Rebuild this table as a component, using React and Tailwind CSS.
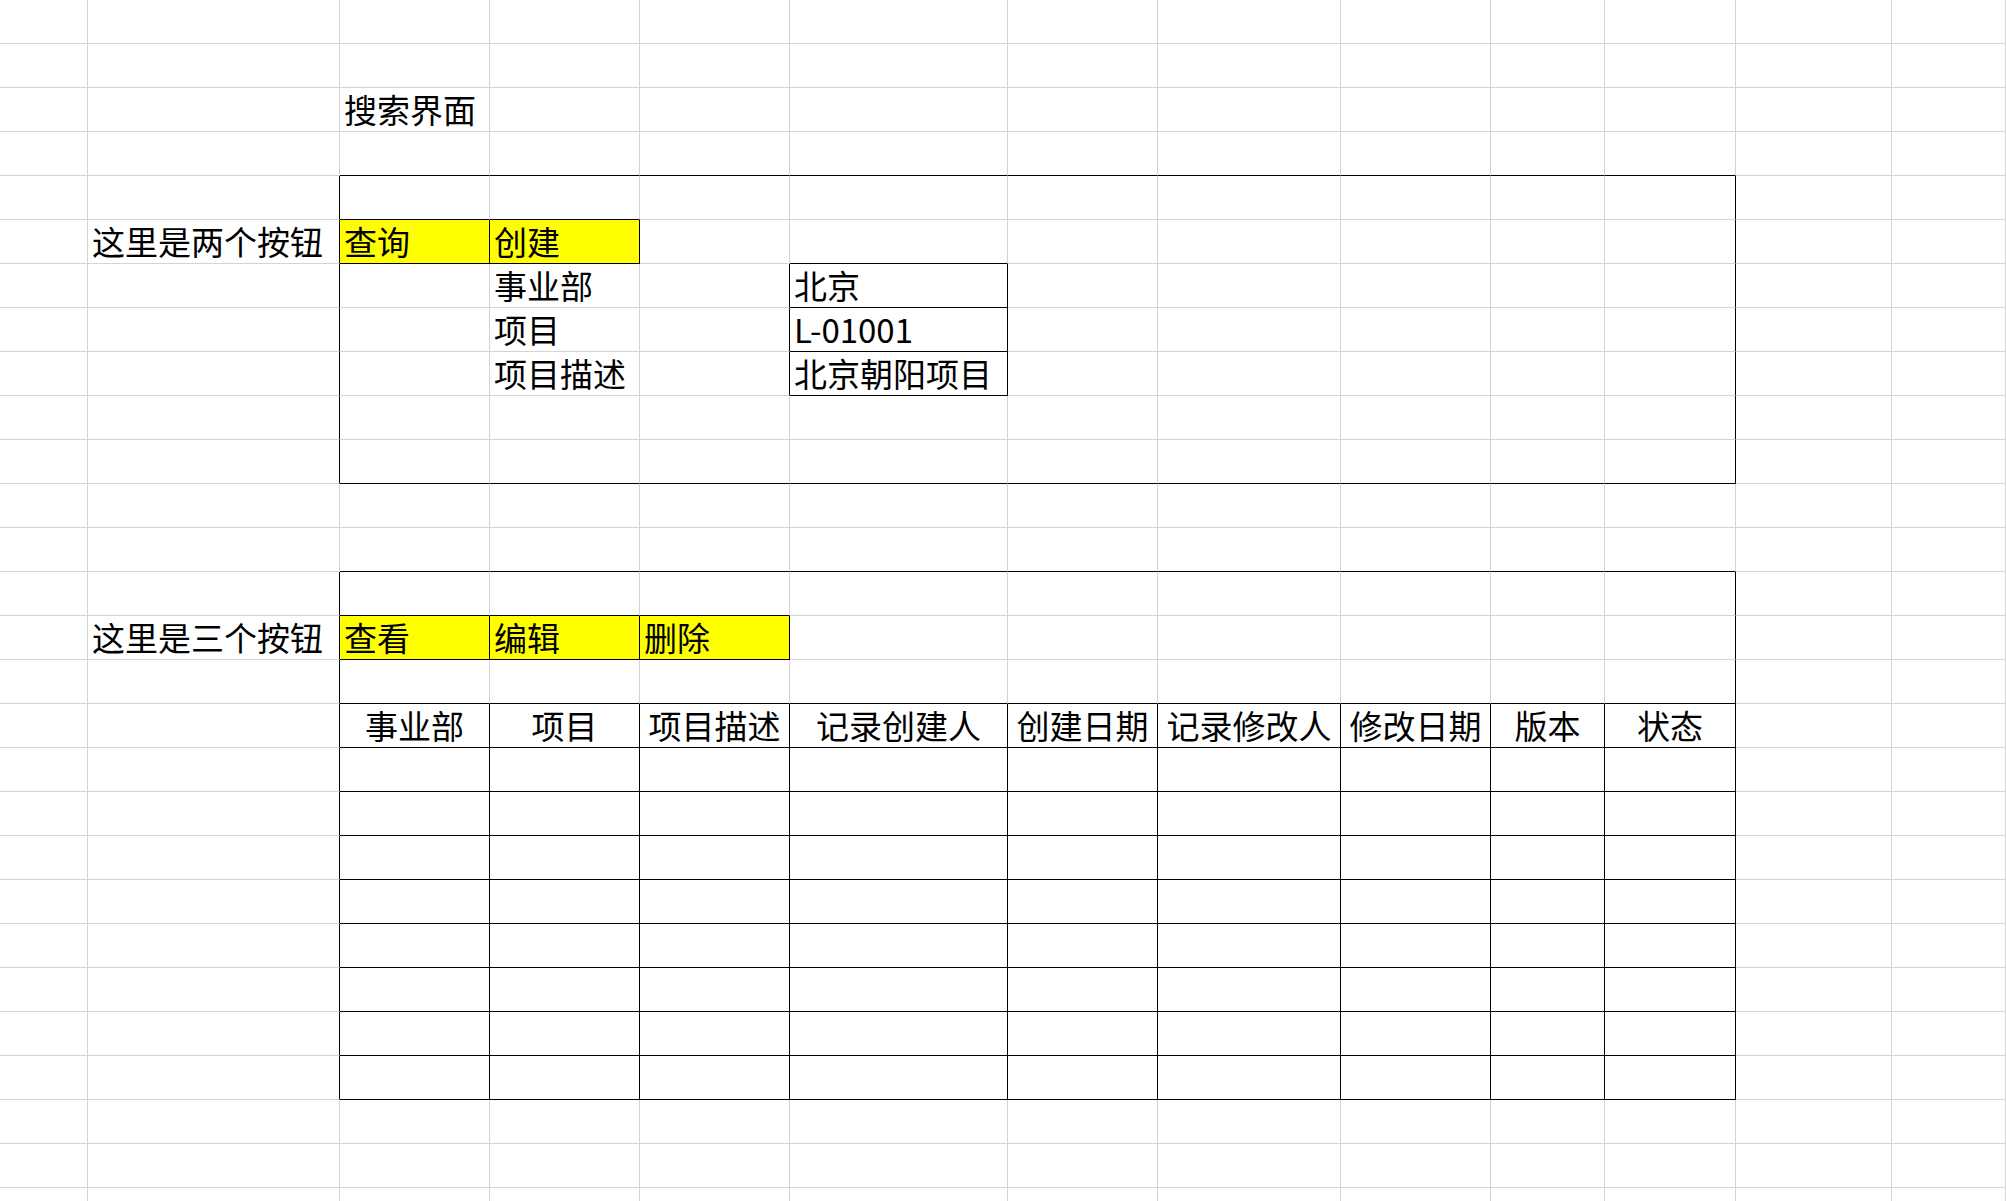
import React from "react";

const ROWS = 28;
const COLS = 13;

const texts = {
  "2,2": "搜索界面",
  "5,1": "这里是两个按钮",
  "5,2": "查询",
  "5,3": "创建",
  "6,3": "事业部",
  "6,5": "北京",
  "7,3": "项目",
  "7,5": "L-01001",
  "8,3": "项目描述",
  "8,5": "北京朝阳项目",
  "14,1": "这里是三个按钮",
  "14,2": "查看",
  "14,3": "编辑",
  "14,4": "删除",
};

const headers = ["事业部", "项目", "项目描述", "记录创建人", "创建日期", "记录修改人", "修改日期", "版本", "状态"];

const inR = (r, a, b) => r >= a && r <= b;

function isYellow(r, c) {
  return (r === 5 && inR(c, 2, 3)) || (r === 14 && inR(c, 2, 4));
}

function rightBlack(r, c) {
  if ((c === 1 || c === 10) && (inR(r, 4, 10) || inR(r, 13, 24))) return true;
  if (r === 5 && inR(c, 2, 3)) return true;
  if (r === 14 && inR(c, 2, 4)) return true;
  if ((c === 4 || c === 5) && inR(r, 6, 8)) return true;
  if (inR(r, 16, 24) && inR(c, 1, 10)) return true;
  return false;
}

function bottomBlack(r, c) {
  if (inR(c, 2, 10) && (r === 3 || r === 10 || r === 12 || r === 24)) return true;
  if (inR(c, 2, 3) && (r === 4 || r === 5)) return true;
  if (inR(c, 2, 4) && (r === 13 || r === 14)) return true;
  if (c === 5 && inR(r, 5, 8)) return true;
  if (inR(c, 2, 10) && inR(r, 15, 24)) return true;
  return false;
}

function Cell({ r, c }) {
  let text = texts[`${r},${c}`];
  let center = false;
  if (r === 16 && inR(c, 2, 10)) {
    text = headers[c - 2];
    center = true;
  }
  const cls = [
    "h-[44px] border-r border-b flex items-center whitespace-nowrap overflow-visible text-[33px] leading-[43px] text-black",
    rightBlack(r, c) ? "border-r-black" : "border-r-[#d4d4d4]",
    bottomBlack(r, c) ? "border-b-black" : "border-b-[#d4d4d4]",
    isYellow(r, c) ? "bg-[#ffff00]" : "bg-white",
    center ? "justify-center" : "justify-start pl-[4px]",
  ].join(" ");
  return <div className={cls}>{text ? <span>{text}</span> : null}</div>;
}

export default function App() {
  const cells = [];
  for (let r = 0; r < ROWS; r++) {
    for (let c = 0; c < COLS; c++) {
      cells.push(<Cell key={`${r}-${c}`} r={r} c={c} />);
    }
  }
  return (
    <div
      className="h-screen w-full overflow-hidden bg-white"
      style={{ fontFamily: '"Noto Sans CJK SC", "Noto Sans", sans-serif' }}
    >
      <div className="grid grid-cols-[88px_252px_150px_150px_150px_218px_150px_183px_150px_114px_131px_156px_1fr] auto-rows-[44px]">
        {cells}
      </div>
    </div>
  );
}
